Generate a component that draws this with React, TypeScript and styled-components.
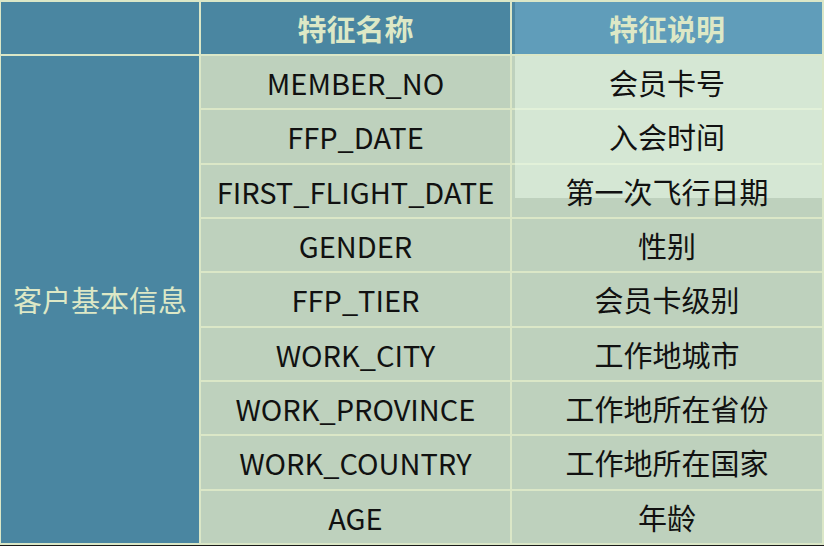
import React from "react";
import styled, { createGlobalStyle } from "styled-components";

const GlobalStyle = createGlobalStyle`
  html, body {
    margin: 0;
    padding: 0;
    background: #1a1a1a;
  }
  body {
    font-family: "Noto Sans CJK SC", "Noto Sans", sans-serif;
  }
`;

const Table = styled.div`
  position: relative;
  width: 824px;
  height: 545px;
  box-sizing: border-box;
  padding: 2px 2px 2px 1px;
  background: #dbe7c7;
  display: grid;
  grid-template-columns: 198px 309px 310px;
  grid-template-rows: 52px repeat(9, 1fr);
  gap: 2px;
`;

const HeadCell = styled.div<{ $light?: boolean }>`
  background: ${(p) => (p.$light ? "#609dba" : "#4a86a1")};
  box-shadow: ${(p) => (p.$light ? "inset 3px 0 0 #4a86a1" : "none")};
  color: #dde8c6;
  font-weight: 700;
  font-size: 29px;
  display: flex;
  align-items: center;
  justify-content: center;
`;

const GroupCell = styled.div`
  grid-row: 2 / span 9;
  background: #4a86a1;
  color: #dde8c6;
  font-size: 29px;
  display: flex;
  align-items: center;
  justify-content: center;
`;

const Cell = styled.div`
  background: #bed1bd;
  color: #111;
  font-size: 29px;
  display: flex;
  align-items: center;
  justify-content: center;
`;

const Label = styled.span`
  position: relative;
  z-index: 2;
`;

const Highlight = styled.div`
  position: absolute;
  left: 515px;
  top: 56px;
  width: 307px;
  height: 142px;
  background: rgba(232, 250, 232, 0.55);
  z-index: 1;
  pointer-events: none;
`;

const rows: [string, string][] = [
  ["MEMBER_NO", "会员卡号"],
  ["FFP_DATE", "入会时间"],
  ["FIRST_FLIGHT_DATE", "第一次飞行日期"],
  ["GENDER", "性别"],
  ["FFP_TIER", "会员卡级别"],
  ["WORK_CITY", "工作地城市"],
  ["WORK_PROVINCE", "工作地所在省份"],
  ["WORK_COUNTRY", "工作地所在国家"],
  ["AGE", "年龄"],
];

export default function App() {
  return (
    <>
      <GlobalStyle />
      <Table>
        <HeadCell />
        <HeadCell>特征名称</HeadCell>
        <HeadCell $light>特征说明</HeadCell>
        <GroupCell>
          <Label>客户基本信息</Label>
        </GroupCell>
        {rows.map(([name, desc]) => (
          <React.Fragment key={name}>
            <Cell style={{ gridColumn: 2 }}>
              <Label>{name}</Label>
            </Cell>
            <Cell style={{ gridColumn: 3 }}>
              <Label>{desc}</Label>
            </Cell>
          </React.Fragment>
        ))}
        <Highlight />
      </Table>
    </>
  );
}
